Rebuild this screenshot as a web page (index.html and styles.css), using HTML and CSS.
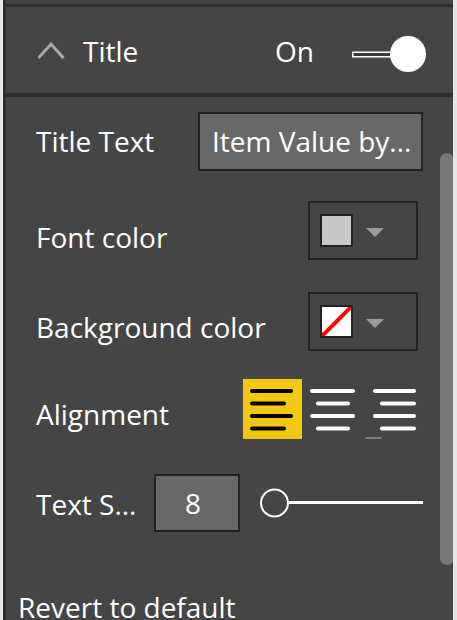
FILE: index.html
```html
<!DOCTYPE html>
<html>
<head>
<meta charset="utf-8">
<link rel="stylesheet" href="styles.css">
</head>
<body>
<div class="panel">
  <div class="header">
    <svg class="chevron" width="28" height="19" viewBox="0 0 28 19"><polyline points="1.5,17 14,3 26.5,17" fill="none" stroke="#a8a8a8" stroke-width="3"/></svg>
    <span class="htitle">Title</span>
    <span class="hon">On</span>
    <svg class="toggle" width="74" height="38" viewBox="0 0 74 38"><rect x="0.75" y="17.25" width="42" height="4.5" fill="#3a3a3a" stroke="#fff" stroke-width="1.5"/><circle cx="56" cy="19" r="18" fill="#fff"/></svg>
  </div>
  <div class="content">
    <div class="row r1">
      <span class="label l1">Title Text</span>
      <div class="textbox">Item Value by...</div>
    </div>
    <div class="row r2">
      <span class="label l2">Font color</span>
      <div class="dropdown">
        <span class="swatch grey"></span>
        <svg class="caret" width="18" height="10" viewBox="0 0 18 10"><polygon points="0,0 18,0 9,9" fill="#9a9a9a"/></svg>
      </div>
    </div>
    <div class="row r3">
      <span class="label l3">Background color</span>
      <div class="dropdown">
        <span class="swatch none"><svg width="29" height="29" viewBox="0 0 29 29"><rect width="29" height="29" fill="#fff"/><line x1="-1" y1="30" x2="30" y2="-1" stroke="#f00" stroke-width="4"/></svg></span>
        <svg class="caret" width="18" height="10" viewBox="0 0 18 10"><polygon points="0,0 18,0 9,9" fill="#9a9a9a"/></svg>
      </div>
    </div>
    <div class="row r4">
      <span class="label l4">Alignment</span>
      <div class="aligns">
        <svg class="acell active" width="59" height="60" viewBox="0 0 59 60"><g stroke="#000" stroke-width="4" stroke-linecap="round"><line x1="9" y1="12" x2="48" y2="12"/><line x1="9" y1="24.5" x2="41" y2="24.5"/><line x1="9" y1="37" x2="48" y2="37"/><line x1="9" y1="49.5" x2="41" y2="49.5"/></g></svg>
        <svg class="acell" width="60" height="60" viewBox="0 0 60 60"><g stroke="#fff" stroke-width="4" stroke-linecap="round"><line x1="10" y1="12" x2="51" y2="12"/><line x1="16" y1="24.5" x2="46" y2="24.5"/><line x1="10" y1="37" x2="51" y2="37"/><line x1="16" y1="49.5" x2="46" y2="49.5"/></g></svg>
        <svg class="acell" width="60" height="60" viewBox="0 0 60 60"><g stroke="#fff" stroke-width="4" stroke-linecap="round"><line x1="13" y1="12" x2="52" y2="12"/><line x1="20" y1="24.5" x2="52" y2="24.5"/><line x1="13" y1="37" x2="52" y2="37"/><line x1="20" y1="49.5" x2="52" y2="49.5"/></g><line x1="4" y1="59" x2="19" y2="59" stroke="#7a7a7a" stroke-width="2" stroke-linecap="round"/></svg>
      </div>
    </div>
    <div class="row r5">
      <span class="label l5">Text S...</span>
      <div class="numbox">8</div>
      <svg class="slider" width="163" height="32" viewBox="0 0 163 32"><line x1="29" y1="15.5" x2="163" y2="15.5" stroke="#fff" stroke-width="3"/><circle cx="14.5" cy="16" r="13.5" fill="#454545" stroke="#fff" stroke-width="2"/></svg>
    </div>
  </div>
  <div class="revert">Revert to default</div>
  <div class="scrollbar"></div>
</div>
</body>
</html>
```

FILE: styles.css
```css
html, body {
  margin: 0;
  padding: 0;
}
body {
  background: #e6e6e6;
  width: 457px;
  height: 620px;
  overflow: hidden;
  font-family: "Open Sans", "Noto Sans", sans-serif;
  font-size: 28px;
  line-height: 28px;
  color: #fff;
}
.panel {
  position: relative;
  box-sizing: border-box;
  margin-left: 3px;
  width: 450px;
  height: 620px;
  overflow: hidden;
  background: #454545;
  border-left: 3px solid #2d2d2d;
}
.header {
  margin-top: 4px;
  height: 86px;
  border-top: 3px solid #2d2d2d;
  border-bottom: 4px solid #2d2d2d;
  display: flex;
  align-items: flex-start;
  padding-left: 31px;
}
.chevron {
  margin-top: 34px;
  flex: none;
}
.htitle {
  margin-left: 18px;
  margin-top: 30px;
  flex: 1;
}
.hon {
  margin-top: 30px;
  margin-right: 38px;
}
.toggle {
  margin-top: 28px;
  margin-right: 27px;
  flex: none;
}
.content {
  display: flex;
  flex-direction: column;
  padding-left: 30px;
  padding-right: 30px;
}
.row {
  display: flex;
  align-items: flex-start;
}
.label {
  flex: 1;
  white-space: nowrap;
}
.r1 { margin-top: 15px; height: 59px; }
.r2 { margin-top: 30px; height: 59px; }
.r3 { margin-top: 32px; height: 59px; }
.r4 { margin-top: 28px; height: 60px; }
.r5 { margin-top: 35px; height: 58px; }
.l1 { margin-top: 15px; }
.l2 { margin-top: 22px; }
.l3 { margin-top: 21px; }
.l4 { margin-top: 21px; }
.l5 { margin-top: 16px; flex: none; width: 118px; }
.textbox {
  box-sizing: border-box;
  width: 225px;
  height: 59px;
  background: #686868;
  border: 2px solid #222;
  padding-left: 12px;
  line-height: 55px;
  white-space: nowrap;
  overflow: hidden;
}
.dropdown {
  box-sizing: border-box;
  width: 110px;
  height: 59px;
  margin-right: 5px;
  border: 2px solid #222;
  display: flex;
  align-items: center;
  padding-left: 10px;
}
.swatch {
  box-sizing: border-box;
  width: 33px;
  height: 33px;
  border: 2px solid #222;
  display: block;
}
.swatch svg { display: block; }
.swatch.grey { background: #c8c8c8; }
.caret {
  margin-left: 13px;
  margin-top: 4px;
}
.aligns {
  display: flex;
  margin-right: 1px;
}
.acell { display: block; }
.acell.active { background: #f2c811; }
.numbox {
  box-sizing: border-box;
  width: 86px;
  height: 58px;
  background: #686868;
  border: 2px solid #222;
  text-align: center;
  line-height: 54px;
  padding-right: 8px;
}
.slider {
  margin-left: 20px;
  margin-top: 13px;
  flex: none;
}
.revert {
  margin-top: 61px;
  padding-left: 12px;
  white-space: nowrap;
}
.scrollbar {
  position: absolute;
  left: 434px;
  top: 153px;
  width: 14px;
  height: 412px;
  border-radius: 7px;
  background: #777;
}
```
